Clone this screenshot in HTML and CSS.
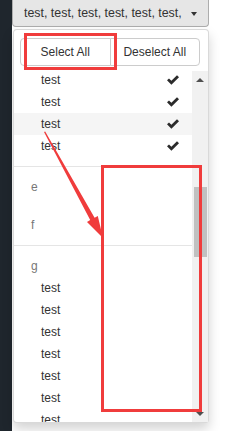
FILE: index.html
```html
<!DOCTYPE html>
<html lang="en">
<head>
    <meta charset="UTF-8">
    <meta name="viewport" content="width=device-width, initial-scale=1.0">
    <title>Multi select</title>
    <link rel="stylesheet" href="styles.css">
</head>
<body>
    <div class="page">
        <div class="sidebar"></div>

        <div class="select">
            <div class="toggle">
                <span class="toggle-text">test, test, test, test, test, test,</span>
                <span class="caret"></span>
            </div>

            <div class="menu">
                <div class="actions">
                    <div class="btn-group">
                        <button class="btn">Select All</button>
                        <button class="btn">Deselect All</button>
                    </div>
                </div>

                <div class="scroll-area">
                    <div class="list">
                        <ul class="options">
                            <li class="opt selected"><span>test</span><svg class="check" viewBox="0 0 12 10"><path d="M0 5.3 L2 3.4 L4.4 5.8 L10 0.2 L12 2.2 L4.4 9.8 Z"/></svg></li>
                            <li class="opt selected"><span>test</span><svg class="check" viewBox="0 0 12 10"><path d="M0 5.3 L2 3.4 L4.4 5.8 L10 0.2 L12 2.2 L4.4 9.8 Z"/></svg></li>
                            <li class="opt selected hover"><span>test</span><svg class="check" viewBox="0 0 12 10"><path d="M0 5.3 L2 3.4 L4.4 5.8 L10 0.2 L12 2.2 L4.4 9.8 Z"/></svg></li>
                            <li class="opt selected"><span>test</span><svg class="check" viewBox="0 0 12 10"><path d="M0 5.3 L2 3.4 L4.4 5.8 L10 0.2 L12 2.2 L4.4 9.8 Z"/></svg></li>
                            <li class="divider"></li>
                            <li class="header">e</li>
                            <li class="header header-gap">f</li>
                            <li class="divider"></li>
                            <li class="header">g</li>
                            <li class="opt"><span>test</span></li>
                            <li class="opt"><span>test</span></li>
                            <li class="opt"><span>test</span></li>
                            <li class="opt"><span>test</span></li>
                            <li class="opt"><span>test</span></li>
                            <li class="opt"><span>test</span></li>
                            <li class="opt"><span>test</span></li>
                        </ul>
                    </div>

                    <div class="scrollbar">
                        <div class="sb-button"><span class="arrow-up"></span></div>
                        <div class="track"><div class="thumb"></div></div>
                        <div class="sb-button"><span class="arrow-down"></span></div>
                    </div>
                </div>
            </div>
        </div>
    </div>

    <!-- annotations -->
    <div class="mark mark-select"></div>
    <div class="mark mark-area"></div>
    <svg class="mark-arrow" width="244" height="431" viewBox="0 0 244 431">
        <polygon points="44,132 90.2,220.1 87,222 103,238 97.8,215.9 94.6,217.7 45.2,131.6"/>
    </svg>
</body>
</html>
```

FILE: styles.css
```css
* {
    box-sizing: border-box;
}

body {
    margin: 0;
    background: #fff;
    font-family: "Liberation Sans", Arial, sans-serif;
    font-size: 12px;
    color: #333;
    overflow: hidden;
}

.page {
    display: flex;
    height: 431px;
}

.sidebar {
    width: 12px;
    background: #1f262d;
    flex-shrink: 0;
}

.select {
    width: 197px;
}

.toggle {
    display: flex;
    align-items: center;
    height: 27px;
    padding: 0 11px 0 11px;
    background: #e6e6e6;
    border: 1px solid #adadad;
    border-top: none;
    border-radius: 0 0 4px 4px;
}

.toggle-text {
    width: 162px;
    overflow: hidden;
    white-space: nowrap;
    font-size: 12.4px;
    line-height: 25px;
}

.caret {
    margin-left: 5px;
    width: 0;
    height: 0;
    border-top: 4px solid #333;
    border-left: 3px solid transparent;
    border-right: 3px solid transparent;
    margin-top: 1px;
}

.menu {
    margin: 2px 0 0 1px;
    width: 196px;
    height: 394px;
    background: #fff;
    border: 1px solid rgba(0, 0, 0, 0.15);
    border-radius: 4px;
    box-shadow: 0 6px 12px rgba(0, 0, 0, 0.175);
    display: flex;
    flex-direction: column;
}

.actions {
    padding: 8px 8px 0 6px;
    margin-bottom: 5px;
}

.btn-group {
    display: flex;
}

.btn {
    flex: 1;
    height: 28px;
    padding: 0;
    background: #fff;
    border: 1px solid #ccc;
    font-family: "Liberation Sans", Arial, sans-serif;
    font-size: 12px;
    color: #333;
}

.btn:first-child {
    border-radius: 4px 0 0 4px;
}

.btn:last-child {
    margin-left: -1px;
    border-radius: 0 4px 4px 0;
}

.scroll-area {
    display: flex;
    height: 351px;
}

.list {
    flex: 1;
    overflow: hidden;
}

.options {
    list-style: none;
    margin: -2px 0 0;
    padding: 0;
}

.opt {
    display: flex;
    align-items: center;
    height: 22px;
    padding: 0 13px 0 27px;
}

.opt span {
    flex: 1;
}

.opt.hover {
    background: #f5f5f5;
}

.check {
    width: 12px;
    height: 10px;
    fill: #2b2b2b;
}

.divider {
    height: 1px;
    margin: 9px 0;
    background: #e5e5e5;
}

.header {
    height: 22px;
    line-height: 22px;
    padding-left: 17px;
    color: #777;
}

.header-gap {
    margin-top: 16px;
}

.scrollbar {
    width: 16px;
    background: #f1f1f1;
    display: flex;
    flex-direction: column;
}

.sb-button {
    height: 17px;
    display: flex;
    align-items: center;
    justify-content: center;
}

.arrow-up {
    border-bottom: 4px solid #505050;
    border-left: 4px solid transparent;
    border-right: 4px solid transparent;
}

.arrow-down {
    border-top: 4px solid #505050;
    border-left: 4px solid transparent;
    border-right: 4px solid transparent;
}

.track {
    flex: 1;
    padding: 99px 1px 0 2px;
}

.thumb {
    height: 70px;
    background: #c1c1c1;
}

.mark {
    position: absolute;
    border: 3px solid #f03c3c;
}

.mark-select {
    left: 24px;
    top: 33px;
    width: 93px;
    height: 37px;
}

.mark-area {
    left: 101px;
    top: 165px;
    width: 101px;
    height: 247px;
}

.mark-arrow {
    position: absolute;
    left: 0;
    top: 0;
    fill: #f03c3c;
}
```
